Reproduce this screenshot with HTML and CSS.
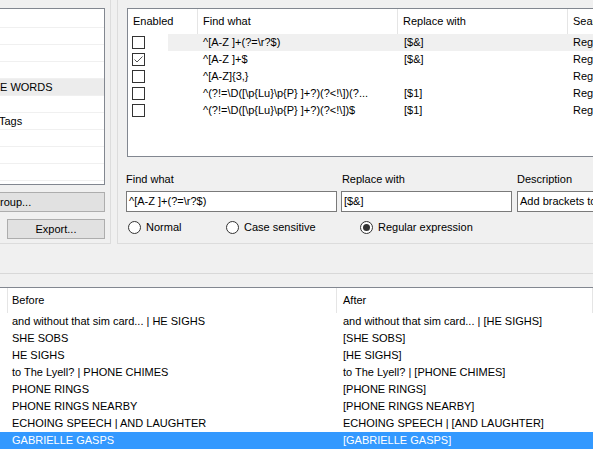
FILE: index.html
```html
<!DOCTYPE html>
<html>
<head>
<meta charset="utf-8">
<link rel="stylesheet" href="styles.css">
</head>
<body>
<div class="top">
  <div class="left-group">
    <div class="group-list">
      <div class="lrow"></div>
      <div class="lrow"></div>
      <div class="lrow"></div>
      <div class="lrow"></div>
      <div class="lrow hl">E WORDS</div>
      <div class="lrow"></div>
      <div class="lrow tags">Tags</div>
      <div class="lrow"></div>
      <div class="lrow"></div>
      <div class="lrow"></div>
    </div>
    <button class="btn btn-group">roup...</button>
    <button class="btn btn-export">Export...</button>
  </div>
  <div class="right-group">
    <span class="legend">Settings group</span>
    <div class="rules">
      <div class="rhead">
        <div class="hc">Enabled</div>
        <div class="hc">Find what</div>
        <div class="hc">Replace with</div>
        <div class="hc">Search</div>
      </div>
      <div class="rrow first">
        <div class="cc"><span class="cb"></span></div>
        <div class="tc">^[A-Z ]+(?=\r?$)</div>
        <div class="tc rc">[$&amp;]</div>
        <div class="tc">Regular expression</div>
      </div>
      <div class="rrow">
        <div class="cc"><span class="cb"><svg width="11" height="11" viewBox="0 0 11 11"><path d="M1.5 5.5 L4 8 L9.5 2.5" fill="none" stroke="#555" stroke-width="1"/></svg></span></div>
        <div class="tc">^[A-Z ]+$</div>
        <div class="tc rc">[$&amp;]</div>
        <div class="tc">Regular expression</div>
      </div>
      <div class="rrow">
        <div class="cc"><span class="cb"></span></div>
        <div class="tc">^[A-Z]{3,}</div>
        <div class="tc rc"></div>
        <div class="tc">Regular expression</div>
      </div>
      <div class="rrow">
        <div class="cc"><span class="cb"></span></div>
        <div class="tc">^(?!=\D([\p{Lu}\p{P} ]+?)(?&lt;!\])(?...</div>
        <div class="tc rc">[$1]</div>
        <div class="tc">Regular expression</div>
      </div>
      <div class="rrow">
        <div class="cc"><span class="cb"></span></div>
        <div class="tc">^(?!=\D([\p{Lu}\p{P} ]+?)(?&lt;!\])$</div>
        <div class="tc rc">[$1]</div>
        <div class="tc">Regular expression</div>
      </div>
    </div>
    <div class="form">
      <div class="field f1">
        <div class="flabel">Find what</div>
        <div class="input">^[A-Z ]+(?=\r?$)</div>
      </div>
      <div class="field f2">
        <div class="flabel">Replace with</div>
        <div class="input">[$&amp;]</div>
      </div>
      <div class="field f3">
        <div class="flabel">Description</div>
        <div class="input">Add brackets to uppercase lines</div>
      </div>
    </div>
    <div class="radios">
      <div class="ropt o1"><span class="radio"></span>Normal</div>
      <div class="ropt o2"><span class="radio"></span>Case sensitive</div>
      <div class="ropt o3"><span class="radio on"></span>Regular expression</div>
    </div>
  </div>
</div>
<div class="splitter"></div>
<div class="results">
  <div class="xhead">
    <div class="xc c0"></div>
    <div class="xc c1">Before</div>
    <div class="xc c2">After</div>
  </div>
  <div class="xrow"><div class="c0"></div><div class="c1">and without that sim card... | HE SIGHS</div><div class="c2">and without that sim card... | [HE SIGHS]</div></div>
  <div class="xrow"><div class="c0"></div><div class="c1">SHE SOBS</div><div class="c2">[SHE SOBS]</div></div>
  <div class="xrow"><div class="c0"></div><div class="c1">HE SIGHS</div><div class="c2">[HE SIGHS]</div></div>
  <div class="xrow"><div class="c0"></div><div class="c1">to The Lyell? | PHONE CHIMES</div><div class="c2">to The Lyell? | [PHONE CHIMES]</div></div>
  <div class="xrow"><div class="c0"></div><div class="c1">PHONE RINGS</div><div class="c2">[PHONE RINGS]</div></div>
  <div class="xrow"><div class="c0"></div><div class="c1">PHONE RINGS NEARBY</div><div class="c2">[PHONE RINGS NEARBY]</div></div>
  <div class="xrow"><div class="c0"></div><div class="c1">ECHOING SPEECH | AND LAUGHTER</div><div class="c2">ECHOING SPEECH | [AND LAUGHTER]</div></div>
  <div class="xrow sel"><div class="c0"></div><div class="c1">GABRIELLE GASPS</div><div class="c2">[GABRIELLE GASPS]</div></div>
</div>
</body>
</html>
```
FILE: styles.css
```css
* { box-sizing: border-box; }
html, body { margin: 0; padding: 0; }
body {
  width: 593px;
  height: 452px;
  overflow: hidden;
  background: #f0f0f0;
  font-family: "Liberation Sans", Arial, sans-serif;
  font-size: 11px;
  color: #000;
}

.top { display: flex; height: 244px; }

.left-group {
  flex: none;
  width: 131px;
  height: 254px;
  margin: -10px 0 0 -20px;
  border: 1px solid #dcdcdc;
  padding: 17px 5px 0 0;
  display: flex;
  flex-direction: column;
}
.group-list {
  height: 177px;
  border: 1px solid #828790;
  background: #fff;
  padding-top: 2px;
  overflow: hidden;
}
.lrow {
  height: 17px;
  line-height: 16px;
  border-bottom: 1px solid #f0f0f0;
  padding-left: 18px;
  white-space: nowrap;
}
.lrow.hl { background: #ececec; }
.lrow.tags { padding-left: 17px; }

.btn {
  height: 20px;
  border: 1px solid #adadad;
  background: #e1e1e1;
  font: inherit;
  color: #000;
  padding: 0;
  margin-top: 7px;
}
.btn-group { text-align: left; padding-left: 18px; }
.btn-export { margin-left: 26px; width: 98px; margin-top: 7px; }

.right-group {
  flex: none;
  width: 600px;
  height: 250px;
  margin: -6px 0 0 6px;
  border: 1px solid #dcdcdc;
  padding: 13px 0 0 9px;
  position: relative;
}
.legend {
  position: absolute;
  left: 12px;
  top: -9px;
  padding: 0 2px;
  background: #f0f0f0;
  line-height: 14px;
}

.rules {
  width: 560px;
  height: 149px;
  border: 1px solid #828790;
  background: #fff;
}
.rhead, .rrow {
  display: grid;
  grid-template-columns: 70px 200px 170px 110px;
}
.hc {
  height: 25px;
  line-height: 25px;
  padding-left: 5px;
  border-right: 1px solid #e5e5e5;
  white-space: nowrap;
}
.rrow { height: 17px; line-height: 17px; }
.rrow.first { background: linear-gradient(to right, transparent 40px, #f0f0f0 40px); }
.cc { padding: 2px 0 0 4px; }
.cb {
  display: block;
  width: 13px;
  height: 13px;
  border: 1px solid #333;
  background: #fff;
}
.cb svg { display: block; }
.tc { padding-left: 5px; white-space: nowrap; overflow: hidden; }
.tc.rc { padding-left: 6px; }

.form {
  display: flex;
  margin: 15px 0 0 -1px;
}
.flabel { height: 19px; line-height: 14px; }
.f1 { width: 212px; }
.f2 { width: 172px; margin-left: 4px; }
.f2 .flabel { padding-left: 1px; }
.f3 { width: 200px; margin-left: 5px; }
.input {
  height: 21px;
  border: 1px solid #7a7a7a;
  background: #fff;
  padding: 0 2px;
  line-height: 19px;
  white-space: nowrap;
  overflow: hidden;
}

.radios {
  display: flex;
  margin-top: 8px;
  line-height: 14px;
}
.ropt { display: flex; align-items: center; }
.o1 { width: 98px; margin-left: 1px; }
.o2 { width: 134px; }
.radio {
  width: 13px;
  height: 13px;
  border: 1px solid #333;
  border-radius: 50%;
  background: #fff;
  margin-right: 5px;
  display: flex;
  align-items: center;
  justify-content: center;
}
.radio.on::after {
  content: "";
  width: 7px;
  height: 7px;
  border-radius: 50%;
  background: #333;
}

.splitter {
  margin-top: 29px;
  height: 14px;
  border-top: 1px solid #d8d8d8;
}

.results {
  border-top: 1px solid #828790;
  background: #fff;
  height: 165px;
}
.xhead, .xrow {
  display: grid;
  grid-template-columns: 8px 329px 1fr;
}
.xhead .xc {
  height: 25px;
  line-height: 25px;
  border-right: 1px solid #e5e5e5;
}
.xrow { height: 17px; line-height: 17px; white-space: nowrap; }
.c1 { padding-left: 4px; }
.c2 { padding-left: 6px; }
.xrow.sel { background: #3399ff; color: #fff; }
```
